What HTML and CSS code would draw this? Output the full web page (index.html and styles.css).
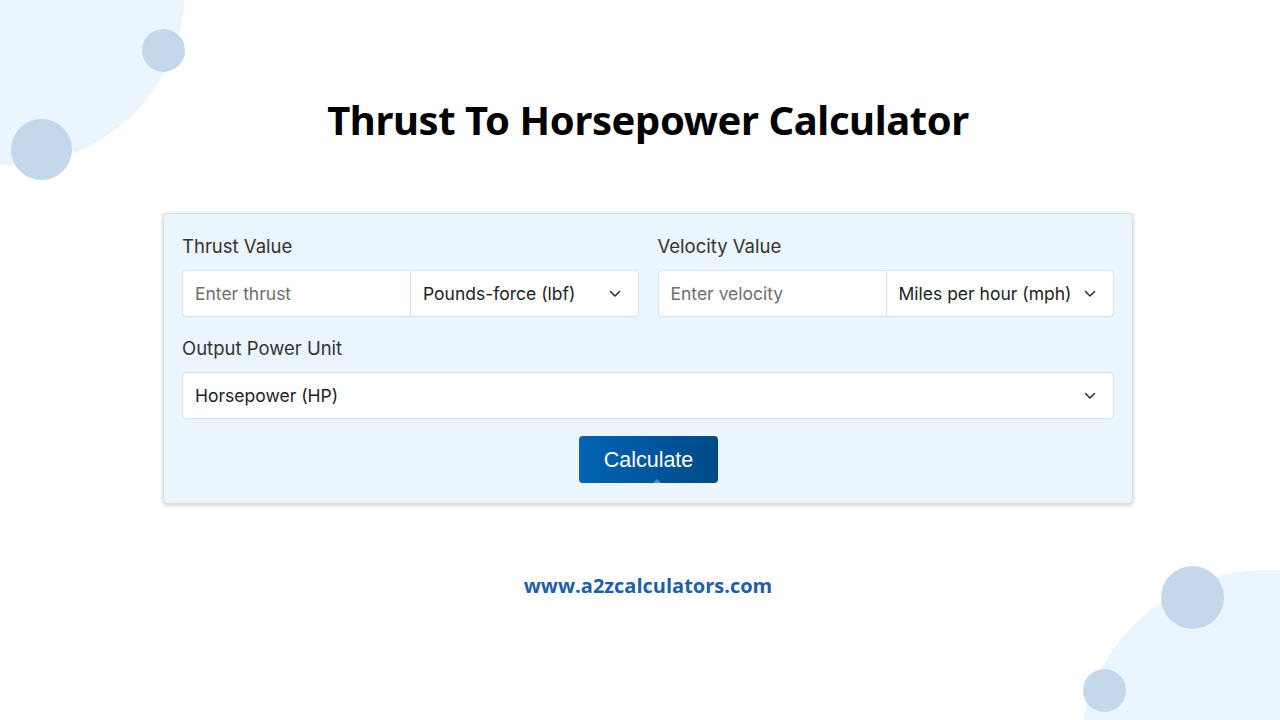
FILE: index.html
```html
<!DOCTYPE html>
<html>
<head>
<meta charset="utf-8">
<link rel="stylesheet" href="styles.css">
</head>
<body>
<svg class="backdrop" viewBox="0 0 1280 720" width="1280" height="720" aria-hidden="true">
  <circle cx="10" cy="-10" r="175" fill="#eaf5fe"/>
  <circle cx="1265" cy="755" r="185" fill="#eaf5fe"/>
  <circle cx="163.5" cy="50.5" r="21.5" fill="#c3d8eb"/>
  <circle cx="41.5" cy="149.5" r="30.5" fill="#c3d8eb"/>
  <circle cx="1192.5" cy="597.5" r="31.5" fill="#c3d8eb"/>
  <circle cx="1104.5" cy="690.5" r="21.5" fill="#c3d8eb"/>
</svg>
<main class="page">
  <h1 class="title">Thrust To Horsepower Calculator</h1>
  <section class="card">
    <div class="row">
      <div class="field">
        <label class="label">Thrust Value</label>
        <div class="group">
          <div class="input placeholder">Enter thrust</div>
          <div class="select">Pounds-force (lbf)<svg class="chev" viewBox="0 0 12 8"><path d="M1.5 1.5 6 6l4.5-4.5" fill="none" stroke="#333" stroke-width="1.6" stroke-linecap="round" stroke-linejoin="round"/></svg></div>
        </div>
      </div>
      <div class="field">
        <label class="label">Velocity Value</label>
        <div class="group">
          <div class="input placeholder">Enter velocity</div>
          <div class="select">Miles per hour (mph)<svg class="chev" viewBox="0 0 12 8"><path d="M1.5 1.5 6 6l4.5-4.5" fill="none" stroke="#333" stroke-width="1.6" stroke-linecap="round" stroke-linejoin="round"/></svg></div>
        </div>
      </div>
    </div>
    <div class="field">
      <label class="label">Output Power Unit</label>
      <div class="select full">Horsepower (HP)<svg class="chev" viewBox="0 0 12 8"><path d="M1.5 1.5 6 6l4.5-4.5" fill="none" stroke="#333" stroke-width="1.6" stroke-linecap="round" stroke-linejoin="round"/></svg></div>
    </div>
    <div class="actions">
      <button class="btn">Calculate</button>
    </div>
  </section>
  <p class="site">www.a2zcalculators.com</p>
</main>
</body>
</html>
```
FILE: styles.css
```css
* { box-sizing: border-box; }
html, body { margin: 0; padding: 0; }
body {
  width: 1280px;
  height: 720px;
  background: #ffffff;
  position: relative;
  overflow: hidden;
  font-family: Inter, "Noto Sans", sans-serif;
}
.backdrop {
  position: absolute;
  left: 0;
  top: 0;
  display: block;
}
.page {
  position: relative;
  display: flex;
  flex-direction: column;
  align-items: center;
  padding-top: 94px;
}
.title {
  margin: 0 0 0 16px;
  font-family: "Noto Sans", sans-serif;
  font-weight: 700;
  font-size: 40px;
  line-height: 52px;
  color: #000;
  letter-spacing: -0.4px;
}
.card {
  margin-top: 67px;
  width: 970px;
  margin-left: 16px;
  background: #eaf5fe;
  border: 1px solid #d2e2ef;
  border-radius: 4px;
  box-shadow: 0 1px 4px rgba(0, 0, 0, 0.22);
  padding: 20px 18px 20px 18px;
  display: flex;
  flex-direction: column;
  gap: 19px;
}
.row {
  display: grid;
  grid-template-columns: 1fr 1fr;
  gap: 19px;
}
.field { display: flex; flex-direction: column; gap: 12px; }
.label {
  font-size: 18.5px;
  line-height: 24px;
  color: #333;
}
.group {
  display: flex;
  height: 47px;
  background: #fff;
  border: 1px solid #cfe3f5;
  border-radius: 4px;
}
.input {
  width: 228px;
  border-right: 1px solid #cfe3f5;
  display: flex;
  align-items: center;
  padding-left: 12px;
  font-size: 17.5px;
}
.placeholder { color: #6e6e6e; }
.select {
  flex: 1;
  display: flex;
  align-items: center;
  justify-content: space-between;
  padding: 0 17px 0 12px;
  font-size: 17.5px;
  color: #222;
}
.select.full {
  flex: none;
  height: 47px;
  background: #fff;
  border: 1px solid #cfe3f5;
  border-radius: 4px;
}
.chev { width: 12px; height: 8px; }
.actions { display: flex; justify-content: center; margin-top: -2px; }
.btn {
  position: relative;
  width: 139px;
  height: 47px;
  border: none;
  border-radius: 4px;
  background: linear-gradient(90deg, #0064b4, #004a87);
  color: #fff;
  font-family: "Liberation Sans", Arial, sans-serif;
  font-size: 21.5px;
  padding-top: 2px;
  margin-left: 1px;
}
.btn::after {
  content: "";
  position: absolute;
  left: 74px;
  bottom: 0;
  border: 4px solid transparent;
  border-bottom-color: #5d8fbd;
}
.site {
  margin: 68px 0 0 16px;
  font-family: "Open Sans", sans-serif;
  font-weight: 700;
  font-size: 20px;
  color: #1f5ea8;
}
```
